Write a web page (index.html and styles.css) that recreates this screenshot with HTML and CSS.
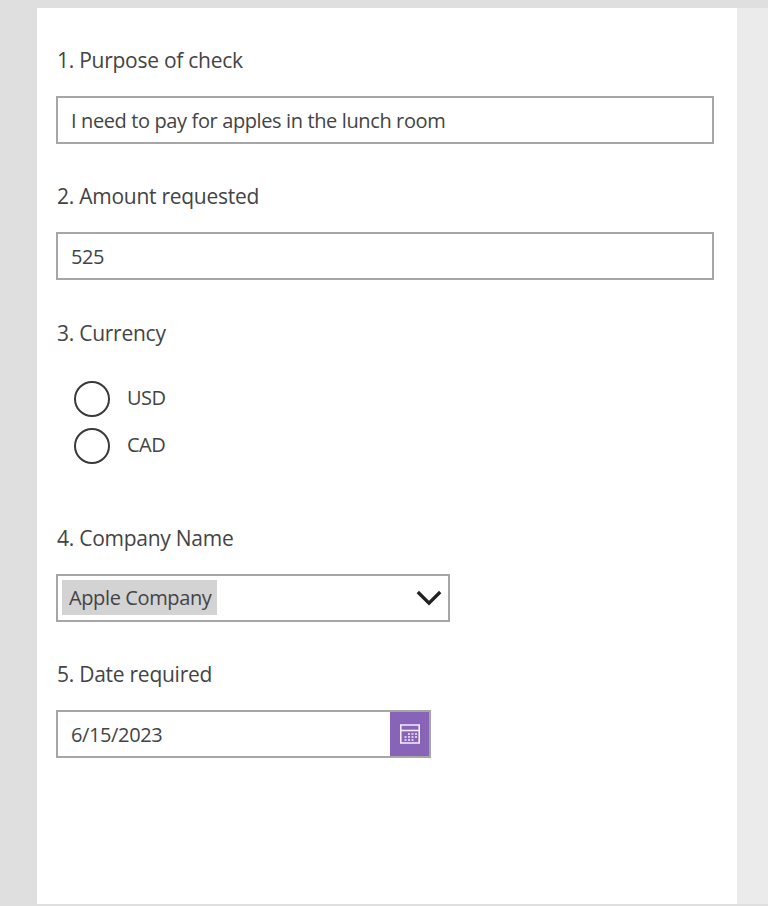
FILE: index.html
```html
<!DOCTYPE html>
<html lang="en">
<head>
<meta charset="utf-8">
<title>Check request</title>
<link rel="stylesheet" href="styles.css">
</head>
<body>
<div class="screen">
  <main class="form">
    <section class="question">
      <div class="label">1. Purpose of check</div>
      <div class="field"><span class="value">I need to pay for apples in the lunch room</span></div>
    </section>
    <section class="question">
      <div class="label">2. Amount requested</div>
      <div class="field"><span class="value">525</span></div>
    </section>
    <section class="question currency">
      <div class="label">3. Currency</div>
      <div class="options">
        <div class="option"><span class="radio"></span><span class="name">USD</span></div>
        <div class="option"><span class="radio"></span><span class="name">CAD</span></div>
      </div>
    </section>
    <section class="question">
      <div class="label">4. Company Name</div>
      <div class="field select">
        <span class="tag">Apple Company</span>
        <svg class="chevron" width="26" height="18" viewBox="0 0 26 18"><path d="M1.8 3 13 14.2 24.2 3" fill="none" stroke="#222" stroke-width="3.3"/></svg>
      </div>
    </section>
    <section class="question">
      <div class="label">5. Date required</div>
      <div class="field date">
        <span class="value">6/15/2023</span>
        <span class="calendar">
          <svg width="20" height="20" viewBox="0 0 20 20" fill="none" stroke="#f3ebfa"><path d="M.8 1H19.2V19H.8Z" stroke-width="1.6"/><path d="M1 6.5H19" stroke-width="1.6"/><path d="M8 10h2M11.5 10h2M15 10h2M4.5 13h2M8 13h2M11.5 13h2M15 13h2M4.5 16h2M8 16h2M11.5 16h2" stroke-width="1.7"/></svg>
        </span>
      </div>
    </section>
  </main>
  <aside class="gutter"></aside>
</div>
</body>
</html>
```

FILE: styles.css
```css
* { box-sizing: border-box; }
html { background: #dfdfdf; }
body {
  margin: 0;
  height: 906px;
  overflow: hidden;
  background: #dfdfdf;
  color: #444;
  font-family: "Open Sans", "Noto Sans", sans-serif;
}
.screen { display: flex; height: 906px; padding: 7.5px 0 2.5px 37px; }
.form { width: 700px; background: #fff; padding: 32.5px 19px 0; }
.gutter { flex: 1; background: #ebebeb; }
.question { height: 136.3px; }
.question.currency { height: 205.6px; }
.label {
  height: 55.5px;
  padding-left: 1px;
  font-size: 21px;
  line-height: 41.6px;
  letter-spacing: -0.26px;
  white-space: nowrap;
}
.field {
  display: flex;
  align-items: center;
  width: 658px;
  height: 48.3px;
  border: 2px solid #a6a6a6;
  font-size: 20px;
  line-height: 32px;
  letter-spacing: -0.38px;
  white-space: nowrap;
}
.value { padding: 2px 0 0 13px; }
.options { padding: 8px 0 0 18px; }
.option { display: flex; align-items: center; height: 46.8px; gap: 17px; font-size: 20px; letter-spacing: -0.5px; }
.name { padding-bottom: 3px; }
.radio { width: 36px; height: 36px; border: 2px solid #3a3a3a; border-radius: 50%; }
.field.select { width: 394px; justify-content: space-between; padding: 0 6px 0 4px; }
.tag { width: 155px; height: 35px; padding: 2px 0 0 7px; background: #d3d3d3; }
.chevron { display: block; }
.field.date { width: 375.4px; justify-content: space-between; }
.calendar { display: flex; align-items: center; justify-content: center; width: 39px; height: 100%; background: #8764b8; }
```
